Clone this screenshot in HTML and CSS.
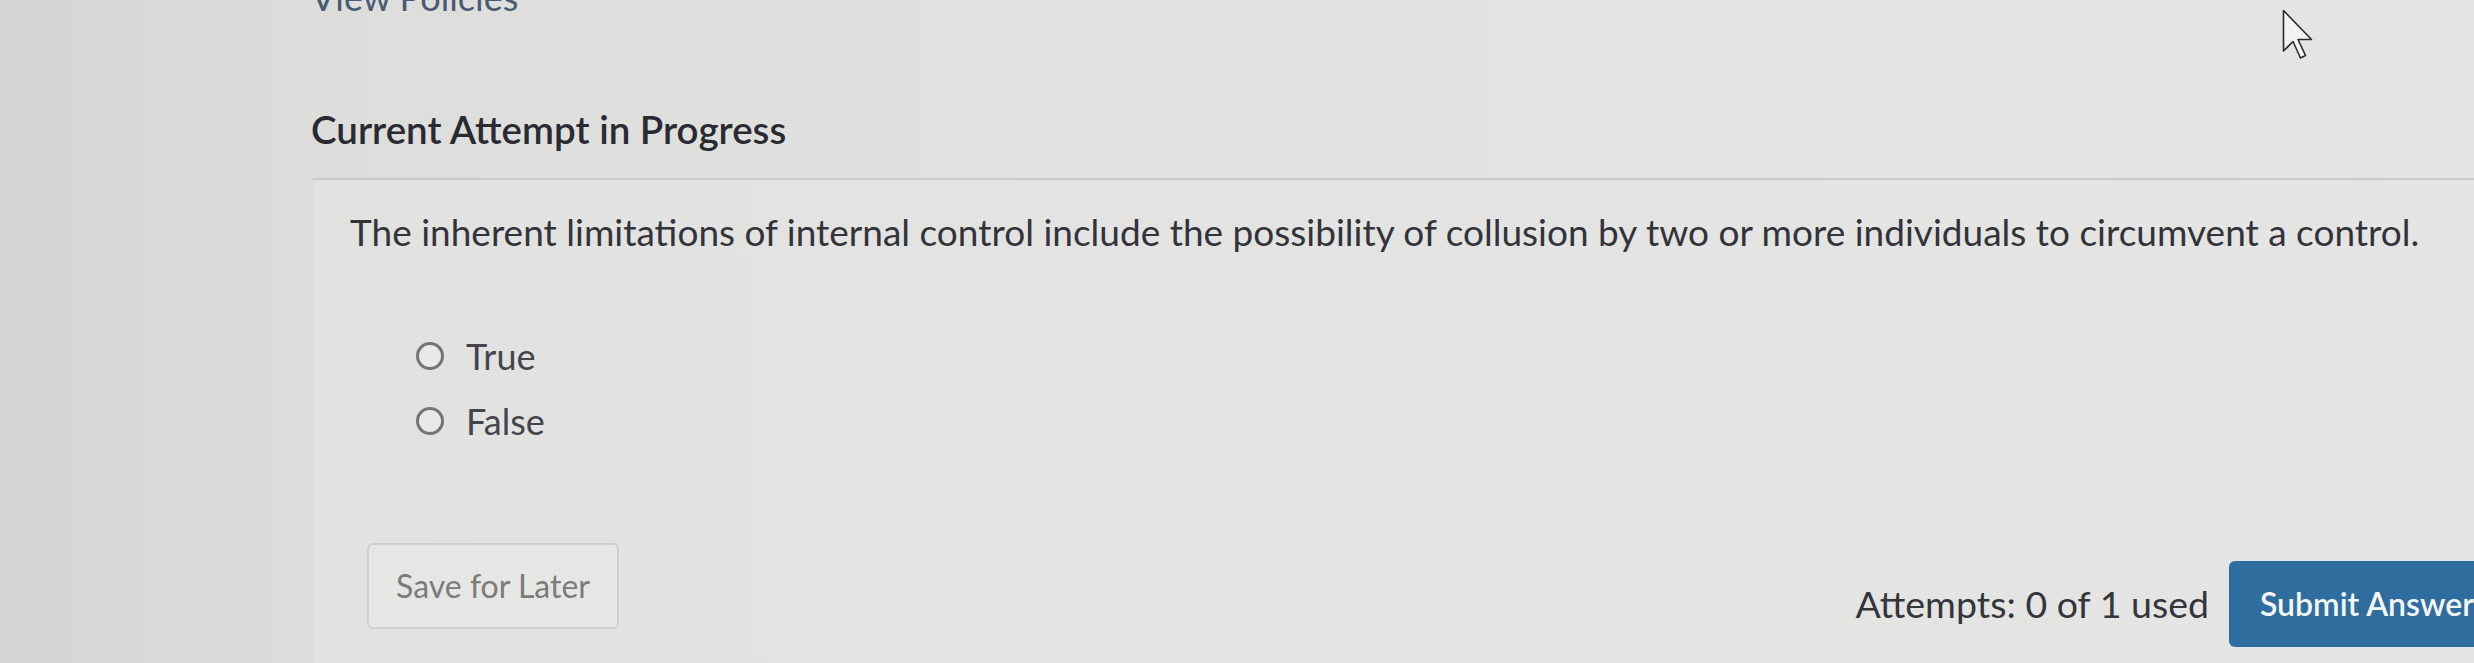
FILE: index.html
```html
<!DOCTYPE html>
<html lang="en">
<head>
<meta charset="utf-8">
<title>Current Attempt in Progress</title>
<link rel="stylesheet" href="styles.css">
</head>
<body>
<div class="page">
  <aside class="rail"></aside>
  <main class="content">
    <a class="policies" href="#">View Policies</a>
    <h2 class="heading">Current Attempt in Progress</h2>
    <section class="question">
      <p class="prompt">The inherent limitations of internal control include the possibility of collusion by two or more individuals to circumvent a control.</p>
      <div class="options">
        <label class="option"><span class="radio"></span><span class="option-text">True</span></label>
        <label class="option"><span class="radio"></span><span class="option-text">False</span></label>
      </div>
      <div class="actions">
        <button class="save" type="button">Save for Later</button>
        <div class="submit-group">
          <span class="attempts">Attempts: 0 of 1 used</span>
          <button class="submit" type="button">Submit Answer</button>
        </div>
      </div>
    </section>
  </main>
</div>
<svg class="cursor" width="34" height="52" viewBox="0 0 34 52" aria-hidden="true">
  <path d="M1.5 1.5 L1.5 42 L11 32.5 L18.5 49 L23.5 46.5 L16 30.5 L29.5 30.5 Z" fill="#f4f4f2" stroke="#2a2a2a" stroke-width="1.6" stroke-linejoin="round"/>
</svg>
</body>
</html>
```

FILE: styles.css
```css
html, body {
  margin: 0;
  padding: 0;
}
body {
  width: 2474px;
  height: 663px;
  overflow: hidden;
  background: #dfe0de;
  font-family: Lato, "Open Sans", "Liberation Sans", sans-serif;
  color: #2e2e36;
}
.page {
  display: flex;
  width: 2474px;
  height: 663px;
  overflow: hidden;
}
.rail {
  flex: none;
  width: 308px;
  background: linear-gradient(90deg, #d5d5d3 0%, #d9d9d7 60%, #dcdcda 100%);
}
.content {
  flex: none;
  width: 2300px;
  display: flex;
  flex-direction: column;
  align-items: flex-start;
  background: linear-gradient(90deg, #dddddb 0%, #e2e3e1 40%, #e5e6e4 100%);
}
.policies {
  display: block;
  margin: -24px 0 0 3px;
  font-size: 36px;
  line-height: 1.2;
  color: #4b5a74;
  text-decoration: none;
}
.heading {
  margin: 87px 0 0 3px;
  font-size: 38.5px;
  line-height: 1.2;
  font-weight: 600;
  color: #2a2a32;
}
.question {
  align-self: stretch;
  margin-top: 26px;
  margin-left: 5px;
  border-top: 2px solid #cacac8;
  background: linear-gradient(90deg, #e2e3e1 0%, #e5e6e4 100%);
  padding: 30px 0 0 37px;
  flex: 1;
}
.prompt {
  margin: 0;
  font-size: 37px;
  line-height: 1.2;
  color: #33333b;
  white-space: nowrap;
}
.options {
  display: flex;
  flex-direction: column;
  margin-top: 69px;
  padding-left: 66px;
}
.option {
  display: flex;
  align-items: center;
  gap: 22px;
  height: 65px;
  font-size: 36px;
  color: #45454b;
}
.radio {
  box-sizing: border-box;
  width: 28px;
  height: 28px;
  border: 3px solid #747474;
  border-radius: 50%;
  background: #e9eae8;
}
.actions {
  display: flex;
  align-items: flex-start;
  justify-content: space-between;
  margin-top: 89px;
  margin-left: 17px;
  width: 2138px;
}
.save {
  width: 252px;
  height: 86px;
  border: 2px solid #cfcfcd;
  border-radius: 6px;
  background: #e6e7e5;
  font-family: inherit;
  font-size: 32px;
  color: #7b7b7b;
  padding: 0;
}
.submit-group {
  display: flex;
  align-items: center;
  gap: 20px;
  margin-top: 18px;
}
.attempts {
  font-size: 37.5px;
  color: #35353c;
}
.submit {
  height: 86px;
  padding: 0 31px;
  border: none;
  border-radius: 6px;
  background: #2e6d9d;
  color: #f4f7fa;
  font-family: inherit;
  font-size: 32px;
  font-weight: 600;
}
.cursor {
  position: absolute;
  left: 2282px;
  top: 9px;
}
```
